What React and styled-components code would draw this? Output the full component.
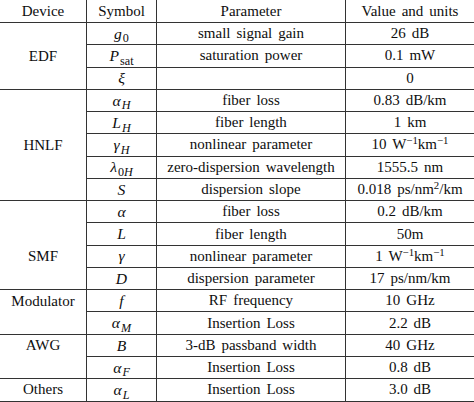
import React from "react";
import styled, { createGlobalStyle } from "styled-components";

const GlobalStyle = createGlobalStyle`
  html, body {
    margin: 0;
    padding: 0;
    background: #ffffff;
  }
  body {
    font-family: "Liberation Serif", "Times New Roman", serif;
    color: #0e0e0e;
  }
`;

const ROW_H = 22.27;
const LINE = "#333333";

const Table = styled.div`
  width: 474px;
  display: flex;
  flex-direction: column;
  font-size: 15px;
  word-spacing: 2.2px;
`;

const Row = styled.div`
  display: grid;
  grid-template-columns: 86px 70px 189px 129px;
  height: ${p => (p.$head ? 23 : ROW_H)}px;
`;

const Cell = styled.div`
  box-sizing: border-box;
  display: flex;
  align-items: center;
  justify-content: center;
  white-space: nowrap;
  line-height: 1;
  border-left: ${p => (p.$first ? "none" : `1px solid ${LINE}`)};
  border-bottom: ${p => (p.$open ? "none" : `1px solid ${LINE}`)};
`;

const Text = styled.span`
  display: inline-block;
  line-height: 1;
`;

const Sym = styled.span`
  font-style: italic;
  font-size: 1.04em;
  word-spacing: 0;
`;

const Sub = styled.sub`
  font-size: 0.78em;
  font-style: ${p => (p.$italic ? "italic" : "normal")};
  vertical-align: -0.3em;
  line-height: 0;
  margin-left: 1px;
`;

const Sup = styled.sup`
  font-size: 0.72em;
  vertical-align: 0.48em;
  line-height: 0;
  word-spacing: 0;
`;

const groups = [
  {
    device: "EDF",
    at: 1,
    rows: [
      [<Sym>g<Sub>0</Sub></Sym>, "small signal gain", "26 dB"],
      [<Sym>P<Sub>sat</Sub></Sym>, "saturation power", "0.1 mW"],
      [<Sym>ξ</Sym>, "", "0"],
    ],
  },
  {
    device: "HNLF",
    at: 2,
    rows: [
      [<Sym>α<Sub $italic>H</Sub></Sym>, "fiber loss", "0.83 dB/km"],
      [<Sym>L<Sub $italic>H</Sub></Sym>, "fiber length", "1 km"],
      [
        <Sym>γ<Sub $italic>H</Sub></Sym>,
        "nonlinear parameter",
        <>10 W<Sup>−1</Sup>km<Sup>−1</Sup></>,
      ],
      [
        <Sym>λ<Sub>0<i>H</i></Sub></Sym>,
        "zero-dispersion wavelength",
        "1555.5 nm",
      ],
      [<Sym>S</Sym>, "dispersion slope", <>0.018 ps/nm<Sup>2</Sup>/km</>],
    ],
  },
  {
    device: "SMF",
    at: 2,
    rows: [
      [<Sym>α</Sym>, "fiber loss", "0.2 dB/km"],
      [<Sym>L</Sym>, "fiber length", "50m"],
      [
        <Sym>γ</Sym>,
        "nonlinear parameter",
        <>1 W<Sup>−1</Sup>km<Sup>−1</Sup></>,
      ],
      [<Sym>D</Sym>, "dispersion parameter", "17 ps/nm/km"],
    ],
  },
  {
    device: "Modulator",
    at: 0,
    rows: [
      [<Sym>f</Sym>, "RF frequency", "10 GHz"],
      [<Sym>α<Sub $italic>M</Sub></Sym>, "Insertion Loss", "2.2 dB"],
    ],
  },
  {
    device: "AWG",
    at: 0,
    rows: [
      [<Sym>B</Sym>, "3-dB passband width", "40 GHz"],
      [<Sym>α<Sub $italic>F</Sub></Sym>, "Insertion Loss", "0.8 dB"],
    ],
  },
  {
    device: "Others",
    at: 0,
    rows: [[<Sym>α<Sub $italic>L</Sub></Sym>, "Insertion Loss", "3.0 dB"]],
  },
];

export default function App() {
  return (
    <>
      <GlobalStyle />
      <Table>
        <Row $head>
          <Cell $first>Device</Cell>
          <Cell>Symbol</Cell>
          <Cell>Parameter</Cell>
          <Cell>Value and units</Cell>
        </Row>
        {groups.map(g =>
          g.rows.map(([sym, param, value], i) => (
            <Row key={g.device + i}>
              <Cell $first $open={i !== g.rows.length - 1}>
                {i === g.at ? g.device : null}
              </Cell>
              <Cell>{sym}</Cell>
              <Cell>{param}</Cell>
              <Cell>
                <Text>{value}</Text>
              </Cell>
            </Row>
          ))
        )}
      </Table>
    </>
  );
}
